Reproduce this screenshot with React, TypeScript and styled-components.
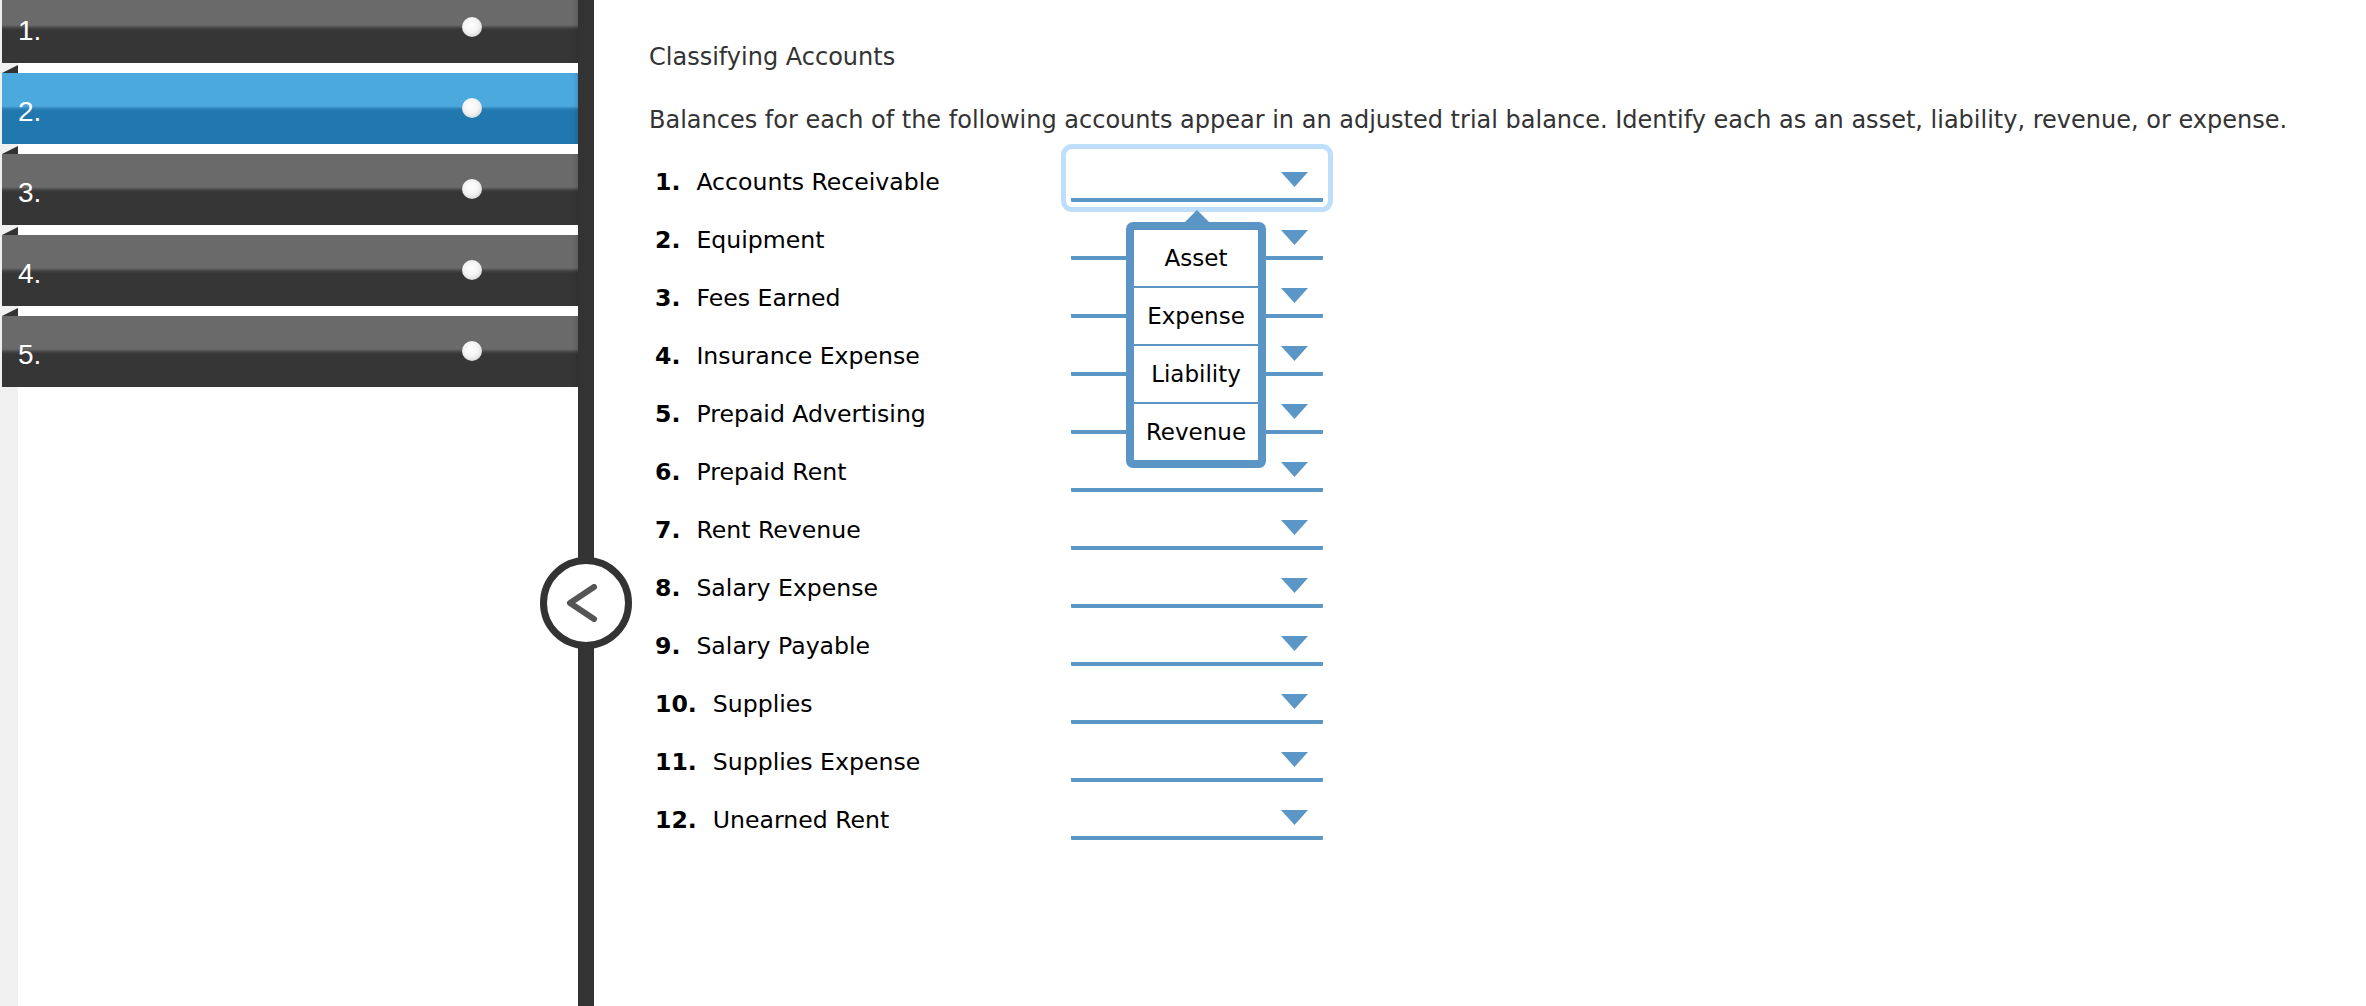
import React from "react";
import styled, { createGlobalStyle } from "styled-components";

const GlobalStyle = createGlobalStyle`
  html, body {
    margin: 0;
    padding: 0;
    background: #fff;
  }
  body {
    font-family: "DejaVu Sans", Verdana, sans-serif;
  }
`;

const Page = styled.div`
  display: flex;
  height: 100vh;
  overflow: hidden;
  position: relative;
`;

const Sidebar = styled.aside`
  flex: 0 0 578px;
  background: linear-gradient(to right, #f0f0f0 18px, #fff 18px);
`;

const StepList = styled.nav`
  display: flex;
  flex-direction: column;
  gap: 10px;
  margin-top: -8px;
  padding-left: 2px;
`;

const Step = styled.div<{ $active?: boolean; $first?: boolean }>`
  position: relative;
  display: flex;
  align-items: flex-start;
  height: 71px;
  padding-left: 16px;
  background: ${(p) =>
    p.$active
      ? "linear-gradient(to bottom, #4ca9de 0, #4ca9de 33px, #2a80b6 36px, #2178ae 38px, #2178ae 100%)"
      : "linear-gradient(to bottom, #6a6a6a 0, #6a6a6a 33px, #444 36px, #363636 38px, #363636 100%)"};
  box-shadow: inset -6px 0 6px -6px rgba(0, 0, 0, 0.25);
  color: #fff;
  font-family: "Liberation Sans", Arial, sans-serif;

  &::before {
    content: ${(p) => (p.$first ? "none" : "''")};
    position: absolute;
    top: -8px;
    left: 0;
    width: 16px;
    height: 8px;
    background: #333;
    clip-path: polygon(0 100%, 100% 0, 100% 100%);
  }
`;

const StepLabel = styled.span`
  font-size: 28px;
  line-height: 30px;
  padding-top: 24px;
`;

const StepDot = styled.span`
  width: 20px;
  height: 20px;
  margin: 25px 96px 0 auto;
  border-radius: 50%;
  background: radial-gradient(circle at 45% 40%, #fff 0, #f4f4f4 45%, #d6d6d6 80%, #a8a8a8 100%);
`;

const Divider = styled.div`
  flex: 0 0 16px;
  background: #333;
`;

const CollapseButton = styled.button`
  position: absolute;
  left: 540px;
  top: 557px;
  width: 92px;
  height: 92px;
  box-sizing: border-box;
  border: 7px solid #333;
  border-radius: 50%;
  background: #fff;
  padding: 0;
  display: flex;
  align-items: center;
  justify-content: center;
  cursor: pointer;

  svg {
    margin-right: 8px;
  }
`;

const Content = styled.main`
  flex: 1;
  padding: 42px 0 0 55px;
  color: #333;
  font-size: 24px;
`;

const Title = styled.h2`
  margin: 0;
  font-size: 24px;
  font-weight: normal;
  line-height: 30px;
`;

const Instructions = styled.p`
  margin: 33px 0 0;
  line-height: 30px;
`;

const QuestionList = styled.ol`
  position: relative;
  list-style: none;
  margin: 9px 0 0;
  padding: 0 0 0 6px;
  font-size: 23.6px;
`;

const QuestionRow = styled.li`
  display: flex;
  align-items: flex-end;
  height: 58px;
`;

const Prompt = styled.span`
  flex: 0 0 416px;
  line-height: 30px;
  padding-bottom: 5px;
  color: #000;
`;

const Num = styled.b`
  margin-right: 16px;
`;

const Select = styled.div<{ $focused?: boolean }>`
  position: relative;
  box-sizing: border-box;
  width: 252px;
  height: 48px;
  border-bottom: 4px solid #5a96c6;
  border-radius: 1px;
  outline: ${(p) => (p.$focused ? "5px solid #bfdefb" : "none")};
  outline-offset: 5px;

  &::after {
    content: "";
    position: absolute;
    right: 15px;
    bottom: 11px;
    width: 27px;
    height: 15px;
    background: #5a96c6;
    clip-path: polygon(0 0, 100% 0, 50% 100%);
  }
`;

const Menu = styled.ul`
  position: absolute;
  z-index: 2;
  left: 477px;
  top: 78px;
  width: 140px;
  box-sizing: border-box;
  margin: 0;
  padding: 0;
  list-style: none;
  background: #fff;
  border: 8px solid #5a95c5;
  border-radius: 7px;
  color: #000;
  font-size: 23px;

  &::before {
    content: "";
    position: absolute;
    top: -20px;
    left: 51px;
    width: 24px;
    height: 12px;
    background: #5a95c5;
    clip-path: polygon(50% 0, 100% 100%, 0 100%);
  }
`;

const MenuOption = styled.li`
  height: 56px;
  line-height: 56px;
  text-align: center;

  & + & {
    border-top: 2px solid #5a95c5;
  }
`;

const steps = ["1.", "2.", "3.", "4.", "5."];

const accounts = [
  "Accounts Receivable",
  "Equipment",
  "Fees Earned",
  "Insurance Expense",
  "Prepaid Advertising",
  "Prepaid Rent",
  "Rent Revenue",
  "Salary Expense",
  "Salary Payable",
  "Supplies",
  "Supplies Expense",
  "Unearned Rent",
];

const options = ["Asset", "Expense", "Liability", "Revenue"];

const App = () => (
  <Page>
    <GlobalStyle />
    <Sidebar>
      <StepList>
        {steps.map((s, i) => (
          <Step key={s} $active={i === 1} $first={i === 0}>
            <StepLabel>{s}</StepLabel>
            <StepDot />
          </Step>
        ))}
      </StepList>
    </Sidebar>
    <Divider />
    <CollapseButton aria-label="Collapse">
      <svg width="32" height="38" viewBox="0 0 32 38">
        <polyline
          points="28,3 4,19 28,35"
          fill="none"
          stroke="#555"
          strokeWidth="6"
          strokeLinecap="round"
          strokeLinejoin="round"
        />
      </svg>
    </CollapseButton>
    <Content>
      <Title>Classifying Accounts</Title>
      <Instructions>
        Balances for each of the following accounts appear in an adjusted trial
        balance. Identify each as an asset, liability, revenue, or expense.
      </Instructions>
      <QuestionList>
        {accounts.map((name, i) => (
          <QuestionRow key={name}>
            <Prompt>
              <Num>{i + 1}.</Num>
              {name}
            </Prompt>
            <Select $focused={i === 0} />
          </QuestionRow>
        ))}
        <Menu>
          {options.map((o) => (
            <MenuOption key={o}>{o}</MenuOption>
          ))}
        </Menu>
      </QuestionList>
    </Content>
  </Page>
);

export default App;
